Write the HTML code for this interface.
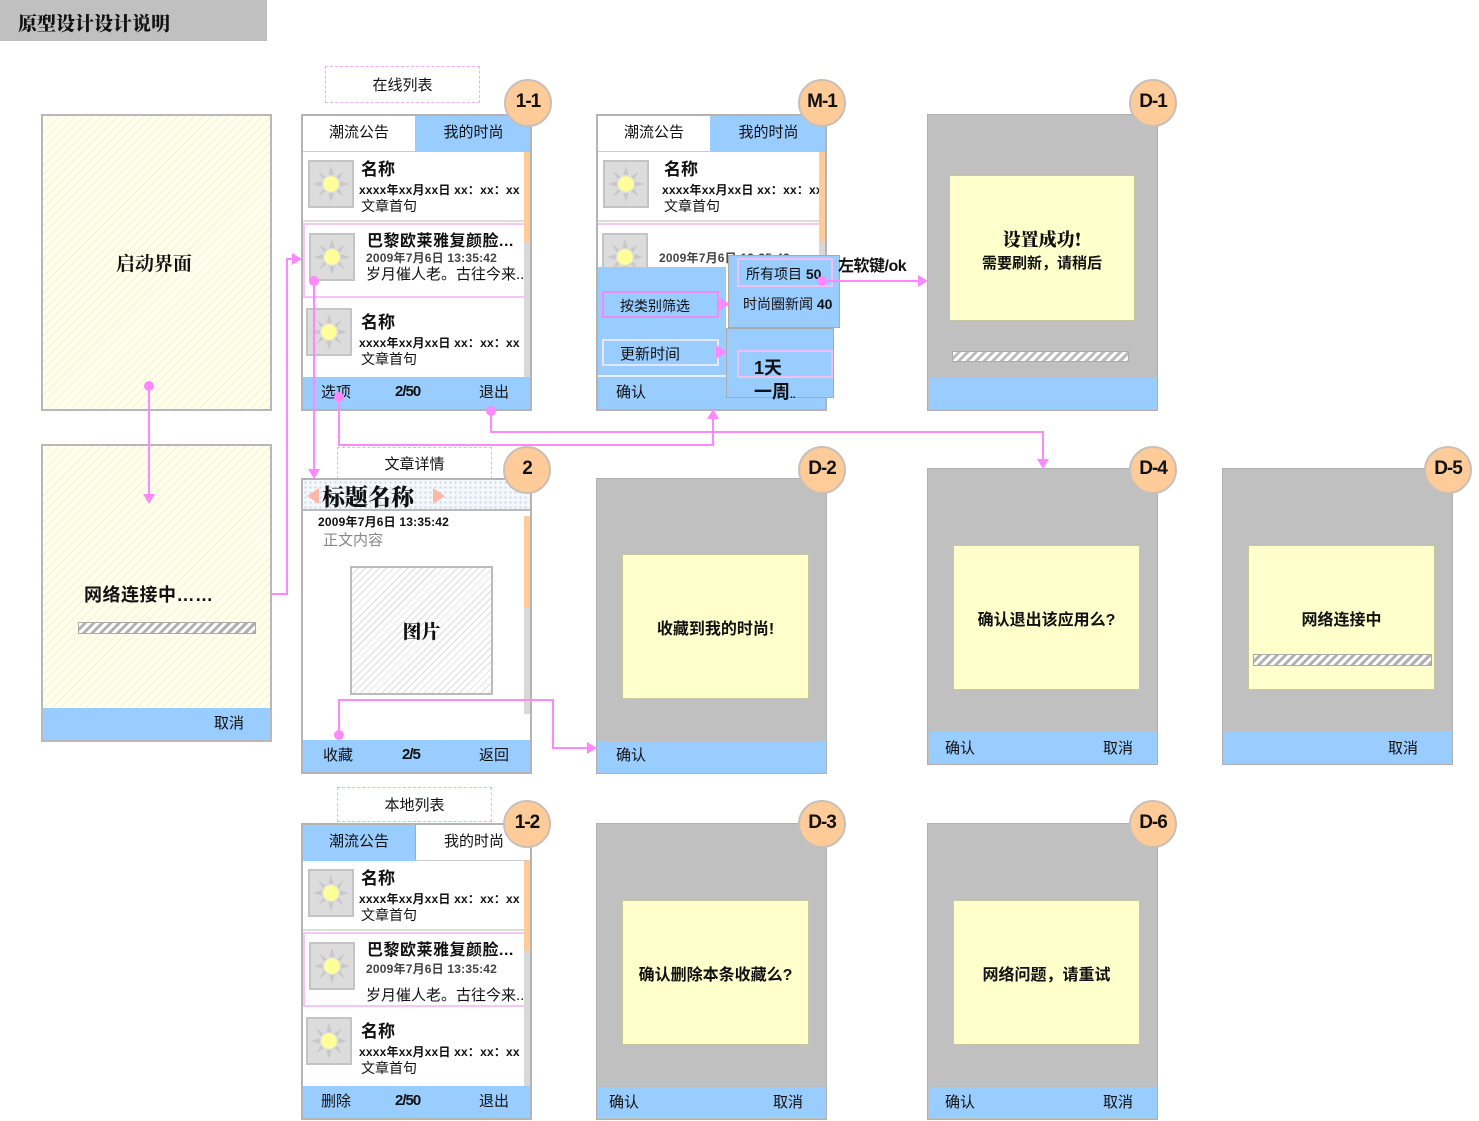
<!DOCTYPE html>
<html><head><meta charset="utf-8">
<style>
*{margin:0;padding:0;box-sizing:border-box}
body{width:1479px;height:1121px;background:#fff;position:relative;overflow:hidden;font-family:"Liberation Sans","Noto Sans CJK SC",sans-serif;color:#111}
.a{position:absolute}
.hatchY{background:repeating-linear-gradient(135deg,#fffff0 0 5px,#f4f4c4 5px 6px);border:2px solid #b8b8b8}
.phone{position:absolute;width:231px;height:297px;border:2px solid #b4b4b4;background:#fff;overflow:hidden}
.bar{position:absolute;left:0;right:0;bottom:0;height:32px;background:#99ccff;font-size:15px}
.bar span{position:absolute;top:4px}
.gray{position:absolute;background:#c0c0c0;width:231px;height:297px;border:1px solid #b0b0b0}
.yel{position:absolute;background:#ffffcc;border:1px solid #c8c8a0;display:flex;align-items:center;justify-content:center;flex-direction:column;font-size:16px;font-weight:bold}
.badge{position:absolute;width:48px;height:48px;border-radius:50%;background:#ffcc99;border:2px solid #c8c0b8;font-weight:bold;font-size:19px;display:flex;align-items:center;justify-content:center;letter-spacing:-1px;padding-bottom:2px}
.lbl{position:absolute;border:1.5px dashed #f0b0f0;font-size:15px;display:flex;align-items:center;justify-content:center;background:#fff}
.prog{position:absolute;height:12px;background:repeating-linear-gradient(135deg,#fff 0 3px,#b0b0b0 3px 6px);border:1px solid #aaa}
.tab{position:absolute;top:0;height:36px;font-size:15px;display:flex;align-items:center;justify-content:center;padding-bottom:5px}
.icon{position:absolute;left:5px;width:46px;height:48px;background:#dcdcdc;border:2px solid #c4c4c4}
.t{position:absolute;white-space:nowrap}
.b{font-weight:bold}
.sm{font-size:12px;font-weight:bold;letter-spacing:0.2px}
.scroll{position:absolute;left:221px;width:7px}
</style></head><body>

<svg width="0" height="0" style="position:absolute"><defs>
<symbol id="sun" viewBox="0 0 46 48"><g fill="#c8c8c8"><polygon points="23,4 26,14 20,14"/><polygon points="23,44 26,34 20,34"/><polygon points="3,24 13,21 13,27"/><polygon points="43,24 33,21 33,27"/><polygon points="9,10 17,16 14,19"/><polygon points="37,10 29,16 32,19"/><polygon points="9,38 17,32 14,29"/><polygon points="37,38 29,32 32,29"/></g><circle cx="23" cy="24" r="9" fill="#ffff99" stroke="#ddd" stroke-width="1"/></symbol>
</defs></svg>

<!-- header -->
<div class="a" style="left:0;top:0;width:267px;height:41px;background:#c0c0c0"></div>
<div class="t b" style="left:18px;top:9px;font-size:19px;font-family:'Noto Serif CJK SC','Liberation Serif',serif;font-weight:900">原型设计设计说明</div>

<!-- startup -->
<div class="a hatchY" style="left:41px;top:114px;width:231px;height:297px"></div>
<div class="t b" style="left:116px;top:249px;font-size:19px;font-family:'Noto Serif CJK SC',serif">启动界面</div>

<div class="a hatchY" style="left:41px;top:444px;width:231px;height:298px"></div>
<div class="t b" style="left:84px;top:581px;font-size:18px;letter-spacing:0.5px">网络连接中……</div>
<div class="prog" style="left:78px;top:622px;width:178px"></div>
<div class="a" style="left:43px;top:708px;width:227px;height:32px;background:#99ccff"></div>
<div class="t" style="left:214px;top:712px;font-size:15px">取消</div>

<!-- labels -->
<div class="lbl" style="left:325px;top:66px;width:155px;height:37px">在线列表</div>
<div class="lbl" style="left:337px;top:447px;width:155px;height:32px;border-bottom:none">文章详情</div>
<div class="lbl" style="left:337px;top:787px;width:155px;height:35px">本地列表</div>

<!-- Phone 1-1 -->
<div class="phone" style="left:301px;top:114px">
 <div class="tab" style="left:0;width:112px;background:#fff;border-bottom:1px solid #ccc">潮流公告</div>
 <div class="tab" style="left:112px;width:117px;background:#99ccff">我的时尚</div>
 <div class="a" style="left:0;top:36px;width:221px;height:70px;border-bottom:2px solid #ddd">
  <div class="icon" style="top:8px"><svg width="42" height="44"><use href="#sun"/></svg></div>
  <div class="t b" style="left:58px;top:3px;font-size:17px">名称</div>
  <div class="t sm" style="left:56px;top:29px">xxxx年xx月xx日 xx：xx：xx</div>
  <div class="t" style="left:58px;top:44px;font-size:14px">文章首句</div>
 </div>
 <div class="a" style="left:0;top:107px;width:224px;height:75px;border:2px solid #f4c8f4">
  <div class="icon" style="top:8px;left:4px"><svg width="42" height="44"><use href="#sun"/></svg></div>
  <div class="t b" style="left:62px;top:2px;font-size:16px;letter-spacing:0.5px">巴黎欧莱雅复颜脸...</div>
  <div class="t sm" style="left:61px;top:24px;color:#444">2009年7月6日 13:35:42</div>
  <div class="t" style="left:61px;top:38px;font-size:15px">岁月催人老。古往今来...</div>
 </div>
 <div class="a" style="left:0;top:184px;width:221px;height:80px">
  <div class="icon" style="top:8px;left:3px"><svg width="42" height="44"><use href="#sun"/></svg></div>
  <div class="t b" style="left:58px;top:8px;font-size:17px">名称</div>
  <div class="t sm" style="left:56px;top:34px">xxxx年xx月xx日 xx：xx：xx</div>
  <div class="t" style="left:58px;top:49px;font-size:14px">文章首句</div>
 </div>
 <div class="scroll" style="top:36px;height:90px;background:#ffcc99"></div>
 <div class="scroll" style="top:126px;height:138px;background:#d8d8d8"></div>
 <div class="bar"><span style="left:18px">选项</span><span style="left:92px;font-weight:bold;letter-spacing:-1px;top:6px">2/50</span><span style="left:176px">退出</span></div>
</div>

<!-- M-1 -->
<div class="phone" style="left:596px;top:114px">
 <div class="tab" style="left:0;width:112px;background:#fff;border-bottom:1px solid #ccc">潮流公告</div>
 <div class="tab" style="left:112px;width:117px;background:#99ccff">我的时尚</div>
 <div class="a" style="left:0;top:36px;width:221px;height:70px;border-bottom:2px solid #ddd">
  <div class="icon" style="top:8px"><svg width="42" height="44"><use href="#sun"/></svg></div>
  <div class="t b" style="left:66px;top:3px;font-size:17px">名称</div>
  <div class="t sm" style="left:64px;top:29px">xxxx年xx月xx日 xx：xx：xx</div>
  <div class="t" style="left:66px;top:44px;font-size:14px">文章首句</div>
 </div>
 <div class="a" style="left:0;top:107px;width:224px;height:75px;border-top:2px solid #f4c8f4">
  <div class="icon" style="top:8px;left:4px"><svg width="42" height="44"><use href="#sun"/></svg></div>
  <div class="t sm" style="left:61px;top:24px;color:#444">2009年7月6日 13:35:42</div>
 </div>
 <div class="scroll" style="top:36px;height:90px;background:#ffcc99"></div>
 <div class="scroll" style="top:126px;height:138px;background:#d8d8d8"></div>
 <div class="bar"><span style="left:18px">确认</span></div>
</div>
<div class="a" style="left:598px;top:267px;width:128px;height:110px;background:#99ccff;border-bottom:2px solid #eef"></div>
<div class="t" style="left:602px;top:291px;width:117px;height:27px;border:2px solid #f08cf0;font-size:14px;padding:3px 0 0 16px">按类别筛选</div>
<div class="t" style="left:602px;top:339px;width:117px;height:27px;border:2px solid #e6e6f8;font-size:15px;padding:2px 0 0 16px">更新时间</div>
<div class="a" style="left:728px;top:255px;width:112px;height:73px;background:#99ccff;border:1px solid #aaa"></div>
<div class="t" style="left:737px;top:258px;width:96px;height:29px;border:2px solid #f0c0f0;font-size:14px;padding:4px 0 0 7px">所有项目 <b>50</b></div>
<div class="t" style="left:743px;top:294px;font-size:14px">时尚圈新闻 <b>40</b></div>
<div class="a" style="left:726px;top:328px;width:108px;height:70px;background:#99ccff;border:1px solid #aaa"></div>
<div class="t b" style="left:737px;top:350px;width:96px;height:28px;border:2px solid #f0c0f0;font-size:18px;padding:2px 0 0 15px">1天</div>
<div class="t b" style="left:754px;top:378px;font-size:18px">一周<span style="font-size:10px">..</span></div>
<div class="t b" style="left:838px;top:252px;font-size:16px;letter-spacing:-0.5px">左软键/ok</div>

<!-- D-1 -->
<div class="gray" style="left:927px;top:114px"></div>
<div class="yel" style="left:949px;top:175px;width:186px;height:146px;justify-content:flex-start;padding-top:50px"><div style="font-size:18px;font-family:'Noto Serif CJK SC',serif;font-weight:900">设置成功!</div><div style="font-size:15px">需要刷新，请稍后</div></div>
<div class="prog" style="left:952px;top:351px;width:177px;height:11px;background:repeating-linear-gradient(135deg,#fff 0 3px,#bbb 3px 6px)"></div>
<div class="a" style="left:929px;top:378px;width:228px;height:31px;background:#99ccff"></div>

<!-- Phone 2 -->
<div class="phone" style="left:301px;top:478px;height:296px">
 <div class="a" style="left:0;top:0;width:229px;height:31px;background:radial-gradient(#c8d8ee 1px,transparent 1.2px) 0 0/5px 5px,#f4f8fc;border-bottom:2px solid #bbb"></div>
 <div class="a" style="left:4px;top:8px;width:0;height:0;border-top:8px solid transparent;border-bottom:8px solid transparent;border-right:12px solid #ffb8a8"></div>
 <div class="t" style="left:19px;top:-1px;font-size:23px;font-weight:900;font-family:'Noto Serif CJK SC',serif">标题名称</div>
 <div class="a" style="left:130px;top:8px;width:0;height:0;border-top:8px solid transparent;border-bottom:8px solid transparent;border-left:12px solid #ffb8a8"></div>
 <div class="t sm" style="left:15px;top:33px">2009年7月6日 13:35:42</div>
 <div class="t" style="left:20px;top:49px;font-size:15px;color:#888">正文内容</div>
 <div class="a" style="left:47px;top:86px;width:143px;height:129px;border:2px solid #bbb;background:repeating-linear-gradient(135deg,#fff 0 4px,#ddd 4px 5px);display:flex;align-items:center;justify-content:center;font-weight:900;font-size:19px;font-family:'Noto Serif CJK SC',serif">图片</div>
 <div class="scroll" style="top:36px;height:92px;background:#ffcc99"></div>
 <div class="scroll" style="top:128px;height:106px;background:#d8d8d8"></div>
 <div class="bar"><span style="left:20px">收藏</span><span style="left:99px;font-weight:bold;letter-spacing:-1px;top:6px">2/5</span><span style="left:176px">返回</span></div>
</div>

<!-- D-2 -->
<div class="gray" style="left:596px;top:478px;height:296px"></div>
<div class="yel" style="left:622px;top:554px;width:187px;height:145px">收藏到我的时尚!</div>
<div class="a" style="left:598px;top:741px;width:228px;height:32px;background:#99ccff"></div>
<div class="t" style="left:616px;top:744px;font-size:15px">确认</div>

<!-- D-4 -->
<div class="gray" style="left:927px;top:468px"></div>
<div class="yel" style="left:953px;top:545px;width:187px;height:145px">确认退出该应用么?</div>
<div class="a" style="left:929px;top:732px;width:228px;height:32px;background:#99ccff"></div>
<div class="t" style="left:945px;top:737px;font-size:15px">确认</div>
<div class="t" style="left:1103px;top:737px;font-size:15px">取消</div>

<!-- D-5 -->
<div class="gray" style="left:1222px;top:468px"></div>
<div class="yel" style="left:1248px;top:545px;width:187px;height:145px;justify-content:flex-start;padding-top:60px">网络连接中</div>
<div class="prog" style="left:1253px;top:654px;width:179px"></div>
<div class="a" style="left:1224px;top:732px;width:228px;height:32px;background:#99ccff"></div>
<div class="t" style="left:1388px;top:737px;font-size:15px">取消</div>

<!-- Phone 1-2 -->
<div class="phone" style="left:301px;top:823px">
 <div class="tab" style="left:0;width:112px;background:#99ccff">潮流公告</div>
 <div class="tab" style="left:112px;width:117px;background:#fff;border-left:1px solid #aaa;border-bottom:1px solid #ccc">我的时尚</div>
 <div class="a" style="left:0;top:36px;width:221px;height:70px;border-bottom:2px solid #ddd">
  <div class="icon" style="top:8px"><svg width="42" height="44"><use href="#sun"/></svg></div>
  <div class="t b" style="left:58px;top:3px;font-size:17px">名称</div>
  <div class="t sm" style="left:56px;top:29px">xxxx年xx月xx日 xx：xx：xx</div>
  <div class="t" style="left:58px;top:44px;font-size:14px">文章首句</div>
 </div>
 <div class="a" style="left:0;top:107px;width:224px;height:75px;border:2px solid #f4c8f4">
  <div class="icon" style="top:8px;left:4px"><svg width="42" height="44"><use href="#sun"/></svg></div>
  <div class="t b" style="left:62px;top:2px;font-size:16px;letter-spacing:0.5px">巴黎欧莱雅复颜脸...</div>
  <div class="t sm" style="left:61px;top:26px;color:#444">2009年7月6日 13:35:42</div>
  <div class="t" style="left:61px;top:50px;font-size:15px">岁月催人老。古往今来...</div>
 </div>
 <div class="a" style="left:0;top:184px;width:221px;height:80px">
  <div class="icon" style="top:8px;left:3px"><svg width="42" height="44"><use href="#sun"/></svg></div>
  <div class="t b" style="left:58px;top:8px;font-size:17px">名称</div>
  <div class="t sm" style="left:56px;top:34px">xxxx年xx月xx日 xx：xx：xx</div>
  <div class="t" style="left:58px;top:49px;font-size:14px">文章首句</div>
 </div>
 <div class="scroll" style="top:36px;height:90px;background:#ffcc99"></div>
 <div class="scroll" style="top:126px;height:138px;background:#d8d8d8"></div>
 <div class="bar"><span style="left:18px">删除</span><span style="left:92px;font-weight:bold;letter-spacing:-1px;top:6px">2/50</span><span style="left:176px">退出</span></div>
</div>

<!-- D-3 -->
<div class="gray" style="left:596px;top:823px"></div>
<div class="yel" style="left:622px;top:900px;width:187px;height:145px">确认删除本条收藏么?</div>
<div class="a" style="left:598px;top:1087px;width:228px;height:31px;background:#99ccff"></div>
<div class="t" style="left:609px;top:1091px;font-size:15px">确认</div>
<div class="t" style="left:773px;top:1091px;font-size:15px">取消</div>

<!-- D-6 -->
<div class="gray" style="left:927px;top:823px"></div>
<div class="yel" style="left:953px;top:900px;width:187px;height:145px">网络问题，请重试</div>
<div class="a" style="left:929px;top:1087px;width:228px;height:31px;background:#99ccff"></div>
<div class="t" style="left:945px;top:1091px;font-size:15px">确认</div>
<div class="t" style="left:1103px;top:1091px;font-size:15px">取消</div>

<!-- connectors -->
<svg class="a" style="left:0;top:0" width="1479" height="1121">
<g stroke="#ff88ff" stroke-width="2" fill="none">
<path d="M149 386V496"/>
<path d="M271 594H287V259H294"/>
<path d="M314 281V471"/>
<path d="M339 397V445H713V417"/>
<path d="M491 411V432H1043V461"/>
<path d="M339 735V700H553V748H589"/>
<path d="M822 281H920"/>
<path d="M719 304H728"/><path d="M719 352H726"/>
</g>
<g fill="#ff88ff">
<circle cx="149" cy="386" r="5"/><circle cx="314" cy="281" r="5"/><circle cx="339" cy="397" r="5"/><circle cx="491" cy="411" r="5"/><circle cx="339" cy="735" r="5"/><circle cx="822" cy="281" r="5"/>
<polygon points="143,494 155,494 149,504"/>
<polygon points="292,253 292,265 302,259"/>
<polygon points="308,469 320,469 314,479"/>
<polygon points="707,419 719,419 713,409"/>
<polygon points="1037,459 1049,459 1043,469"/>
<polygon points="587,742 587,754 597,748"/>
<polygon points="918,275 918,287 928,281"/>
<polygon points="718,297 718,311 730,304"/>
<polygon points="716,345 716,359 727,352"/>
</g>
</svg>

<!-- badges -->
<div class="badge" style="left:504px;top:79px">1-1</div>
<div class="badge" style="left:798px;top:79px">M-1</div>
<div class="badge" style="left:1129px;top:79px">D-1</div>
<div class="badge" style="left:503px;top:446px">2</div>
<div class="badge" style="left:798px;top:446px">D-2</div>
<div class="badge" style="left:1129px;top:446px">D-4</div>
<div class="badge" style="left:1424px;top:446px">D-5</div>
<div class="badge" style="left:503px;top:800px">1-2</div>
<div class="badge" style="left:798px;top:800px">D-3</div>
<div class="badge" style="left:1129px;top:800px">D-6</div>
</body></html>
